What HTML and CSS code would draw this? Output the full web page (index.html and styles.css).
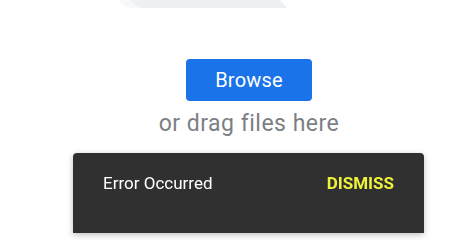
FILE: index.html
```html
<!DOCTYPE html>
<html>
<head>
<meta charset="utf-8">
<link rel="stylesheet" href="styles.css">
</head>
<body>
<main class="drop">
  <div class="art">
    <svg width="200" height="10" viewBox="0 0 200 10">
      <path d="M0 0 H161 L168 8 H14 Q6 8 0 0 Z" fill="#eef0f2"/>
      <path d="M0 0 H12 Q14 5 22 8 H14 Q6 8 0 0 Z" fill="#f7f8f9"/>
    </svg>
  </div>
  <button class="browse">Browse</button>
  <p class="hint">or drag files here</p>
</main>
<div class="snackbar">
  <span class="msg">Error Occurred</span>
  <span class="action">DISMISS</span>
</div>
</body>
</html>
```
FILE: styles.css
```css
html, body {
  margin: 0;
  padding: 0;
  background: #ffffff;
  font-family: Roboto, "Noto Sans", Arial, sans-serif;
}
.drop {
  display: flex;
  flex-direction: column;
  align-items: center;
  padding-left: 24px;
}
.art {
  height: 8px;
  width: 200px;
  display: flex;
  align-self: flex-start;
  margin-left: 95px;
}
.art svg {
  display: block;
}
.browse {
  margin-top: 51px;
  width: 126px;
  height: 42px;
  border: none;
  border-radius: 4px;
  background: #1a73e8;
  color: #ffffff;
  font-family: Roboto, "Noto Sans", Arial, sans-serif;
  font-size: 20px;
  letter-spacing: 0.2px;
  padding: 0;
}
.hint {
  margin: 8px 0 0;
  font-size: 23px;
  letter-spacing: 0.5px;
  color: #7b7f84;
  line-height: 30px;
}
.snackbar {
  position: fixed;
  top: 153px;
  left: 73px;
  width: 351px;
  height: 80px;
  box-sizing: border-box;
  padding: 0 30px 20px;
  background: #303030;
  border-radius: 4px 4px 0 0;
  box-shadow: 0 2px 6px rgba(0,0,0,0.25);
  display: flex;
  align-items: center;
  justify-content: space-between;
  font-size: 17px;
}
.msg {
  color: #ffffff;
}
.action {
  color: #eef23c;
  font-weight: 700;
}
```
